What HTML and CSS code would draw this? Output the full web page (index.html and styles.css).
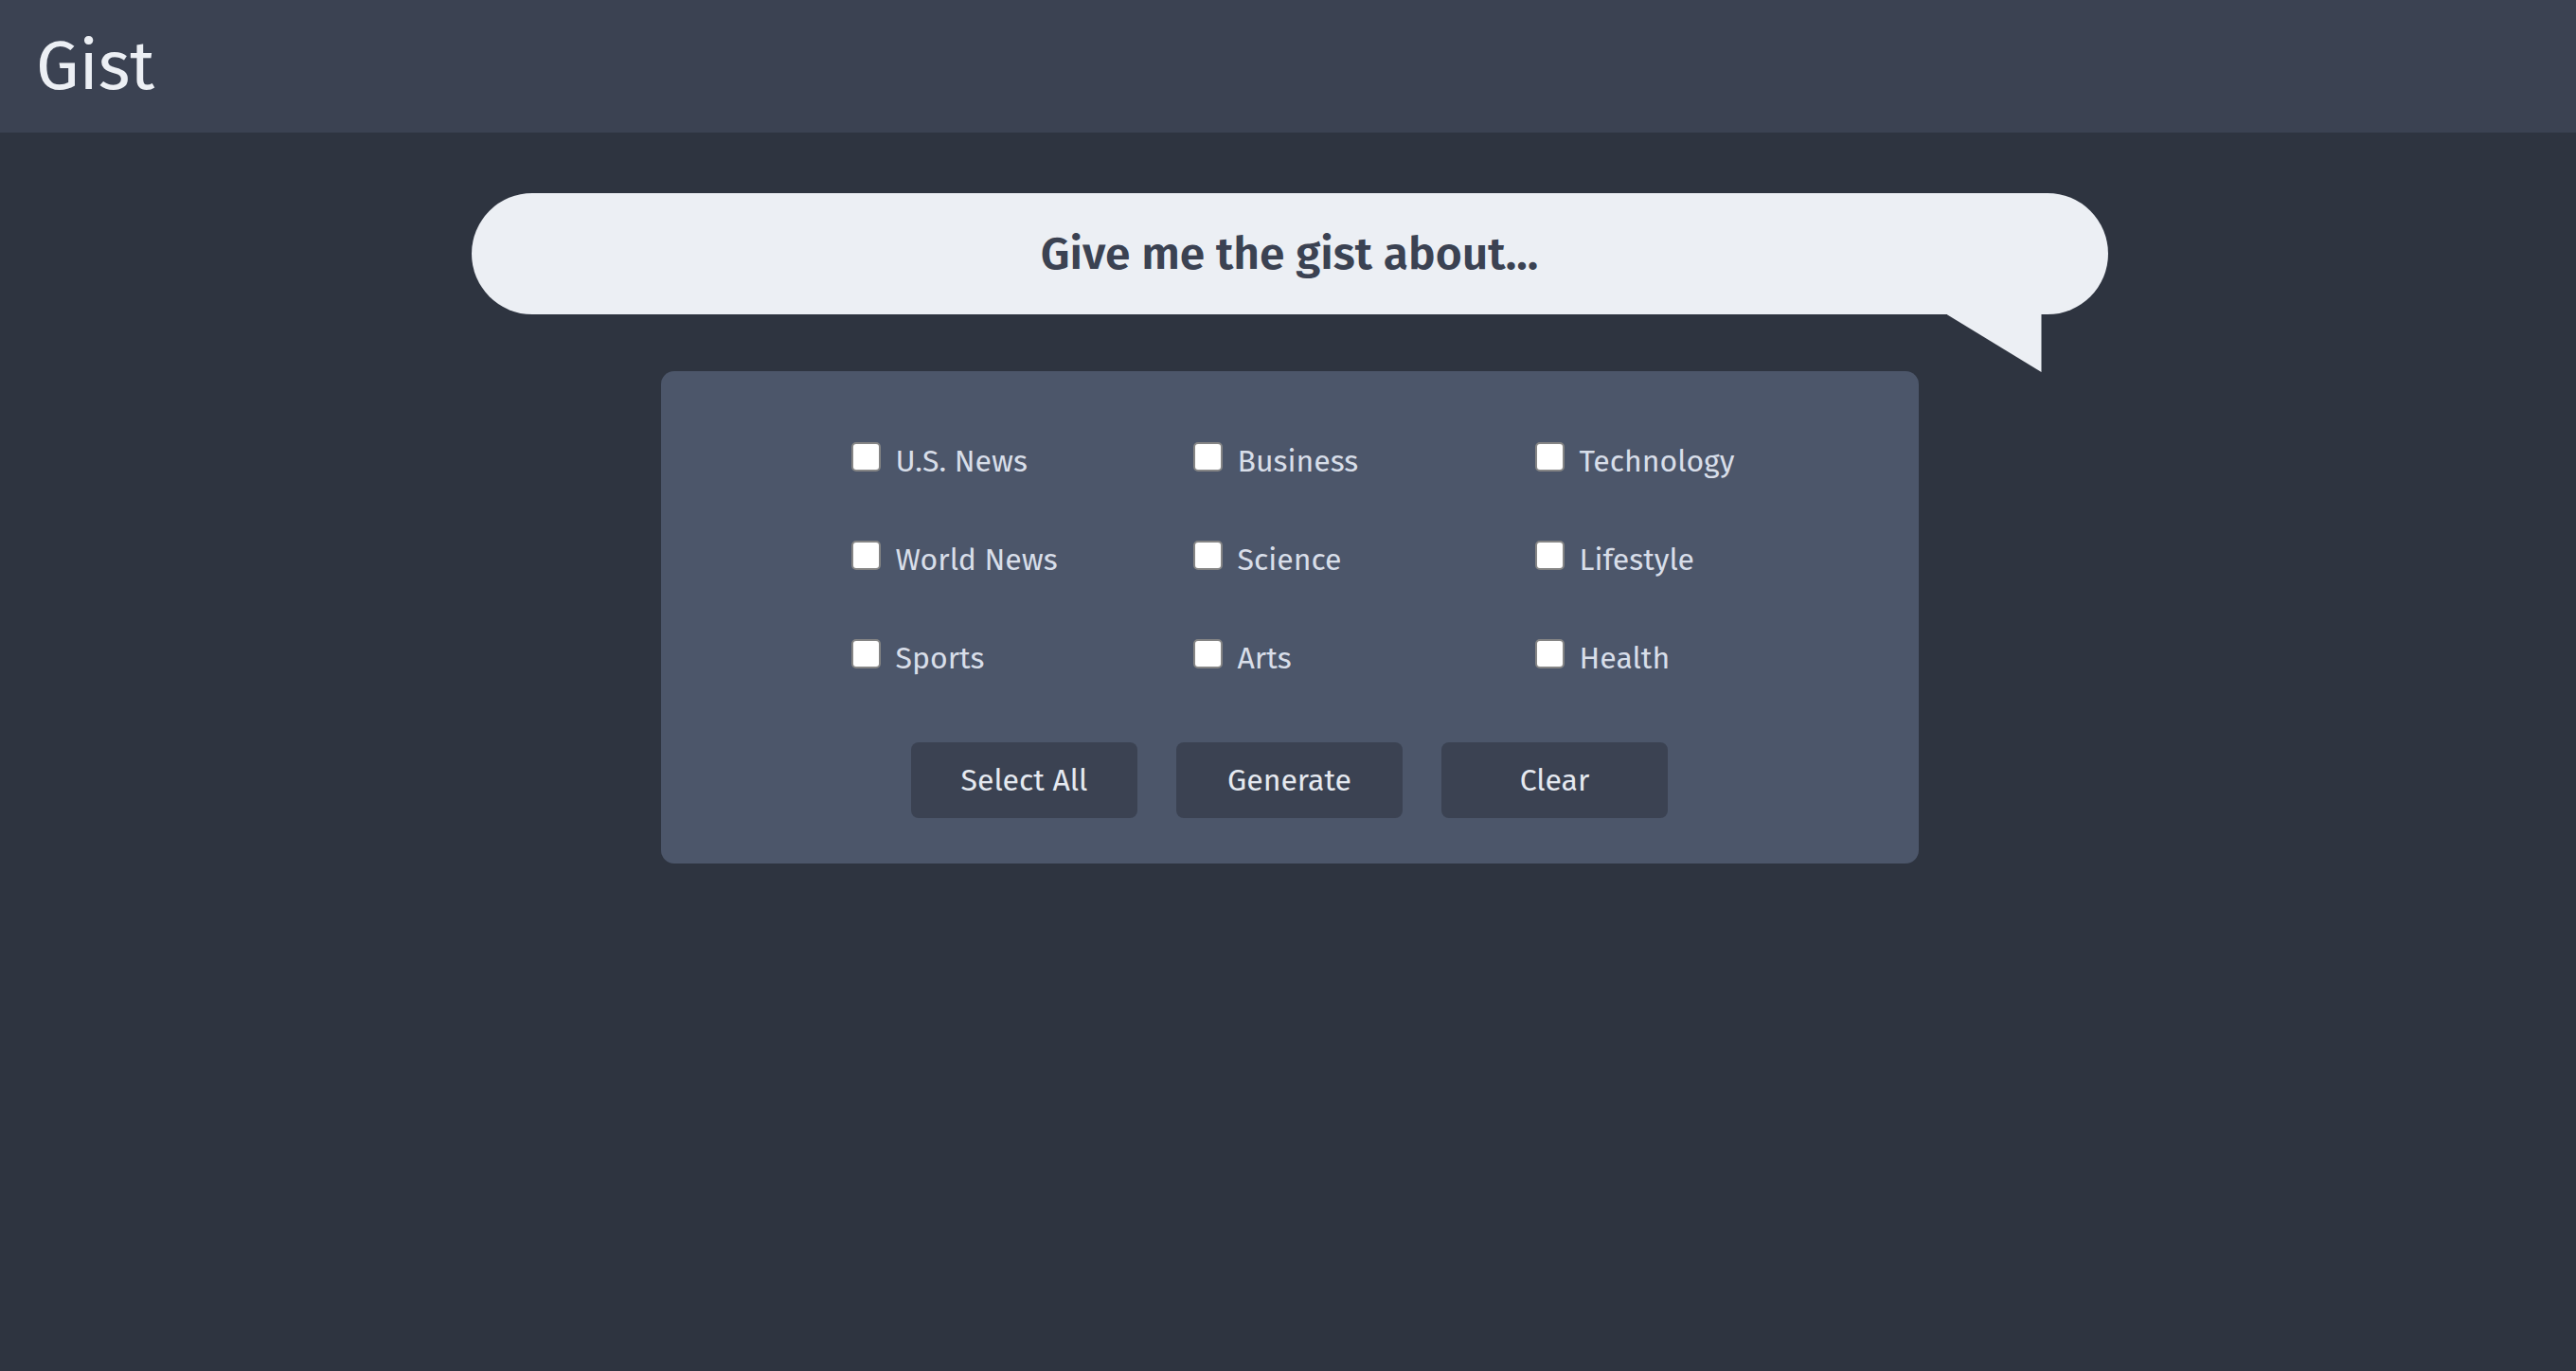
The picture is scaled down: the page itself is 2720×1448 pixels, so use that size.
FILE: index.html
```html
<!DOCTYPE html>
<html lang="en">
<head>
    <meta charset="UTF-8">
    <meta name="viewport" content="width=device-width, initial-scale=1.0">
    <title>Gist</title>
    <link rel="stylesheet" href="styles.css">
</head>
<body>

    <header class="topbar">
        <h1 class="brand">Gist</h1>
    </header>

    <main class="content">
        <div class="bubble">
            <h2>Give me the gist about...</h2>
        </div>

        <form class="panel">
            <div class="topics">
                <label class="topic"><input type="checkbox" name="us">U.S. News</label>
                <label class="topic"><input type="checkbox" name="business">Business</label>
                <label class="topic"><input type="checkbox" name="technology">Technology</label>
                <label class="topic"><input type="checkbox" name="world">World News</label>
                <label class="topic"><input type="checkbox" name="science">Science</label>
                <label class="topic"><input type="checkbox" name="lifestyle">Lifestyle</label>
                <label class="topic"><input type="checkbox" name="sports">Sports</label>
                <label class="topic"><input type="checkbox" name="arts">Arts</label>
                <label class="topic"><input type="checkbox" name="health">Health</label>
            </div>
            <div class="actions">
                <button type="button" id="select-all">Select All</button>
                <button type="button" id="generate">Generate</button>
                <button type="button" id="clear">Clear</button>
            </div>
        </form>
    </main>

</body>
</html>
```

FILE: styles.css
```css
/* page */
body {
    margin: 0;
    min-height: 100vh;
    background-color: #2E3440;
    font-family: 'Fira Sans', 'Open Sans', sans-serif;
    color: #D8DEE9;
}

/* top bar */
.topbar {
    height: 140px;
    background-color: #3B4252;
    display: flex;
    align-items: center;
    padding-left: 38px;
}

.brand {
    margin: 0;
    font-size: 72px;
    font-weight: 400;
    color: #ECEFF4;
}

.content {
    display: flex;
    flex-direction: column;
    align-items: center;
    padding-left: 3px;
}

/* speech bubble */
.bubble {
    position: relative;
    width: 1728px;
    height: 128px;
    margin-top: 64px;
    border-radius: 64px;
    background-color: #ECEFF4;
    display: flex;
    align-items: center;
    justify-content: center;
}

.bubble::after {
    content: "";
    position: absolute;
    top: 100%;
    right: 70px;
    width: 100px;
    height: 61px;
    background-color: #ECEFF4;
    clip-path: polygon(0 0, 100% 0, 100% 100%);
}

.bubble h2 {
    margin: 0;
    font-size: 48px;
    font-weight: 600;
    color: #3B4252;
}

/* topic panel */
.panel {
    width: 1328px;
    height: 520px;
    box-sizing: border-box;
    margin-top: 60px;
    padding-top: 74px;
    border-radius: 14px;
    background-color: #4C566A;
}

.topics {
    display: grid;
    grid-template-columns: repeat(3, 204px);
    justify-content: center;
    column-gap: 157px;
    row-gap: 62px;
}

.topic {
    font-size: 32px;
    line-height: 42px;
    white-space: nowrap;
    color: #D8DEE9;
}

.topic input {
    appearance: none;
    box-sizing: border-box;
    width: 31px;
    height: 31px;
    margin: 0 16px 0 0;
    vertical-align: baseline;
    background-color: #fff;
    border: 2px solid #858585;
    border-radius: 5px;
}

.topic input:checked {
    background-color: #88C0D0;
}

/* buttons */
.actions {
    display: flex;
    justify-content: center;
    gap: 41px;
    margin-top: 68px;
}

.actions button {
    width: 239px;
    height: 80px;
    border: none;
    border-radius: 8px;
    background-color: #3B4252;
    color: #E5E9F0;
    font-family: 'Fira Sans', 'Open Sans', sans-serif;
    font-size: 32px;
    cursor: pointer;
}
```
